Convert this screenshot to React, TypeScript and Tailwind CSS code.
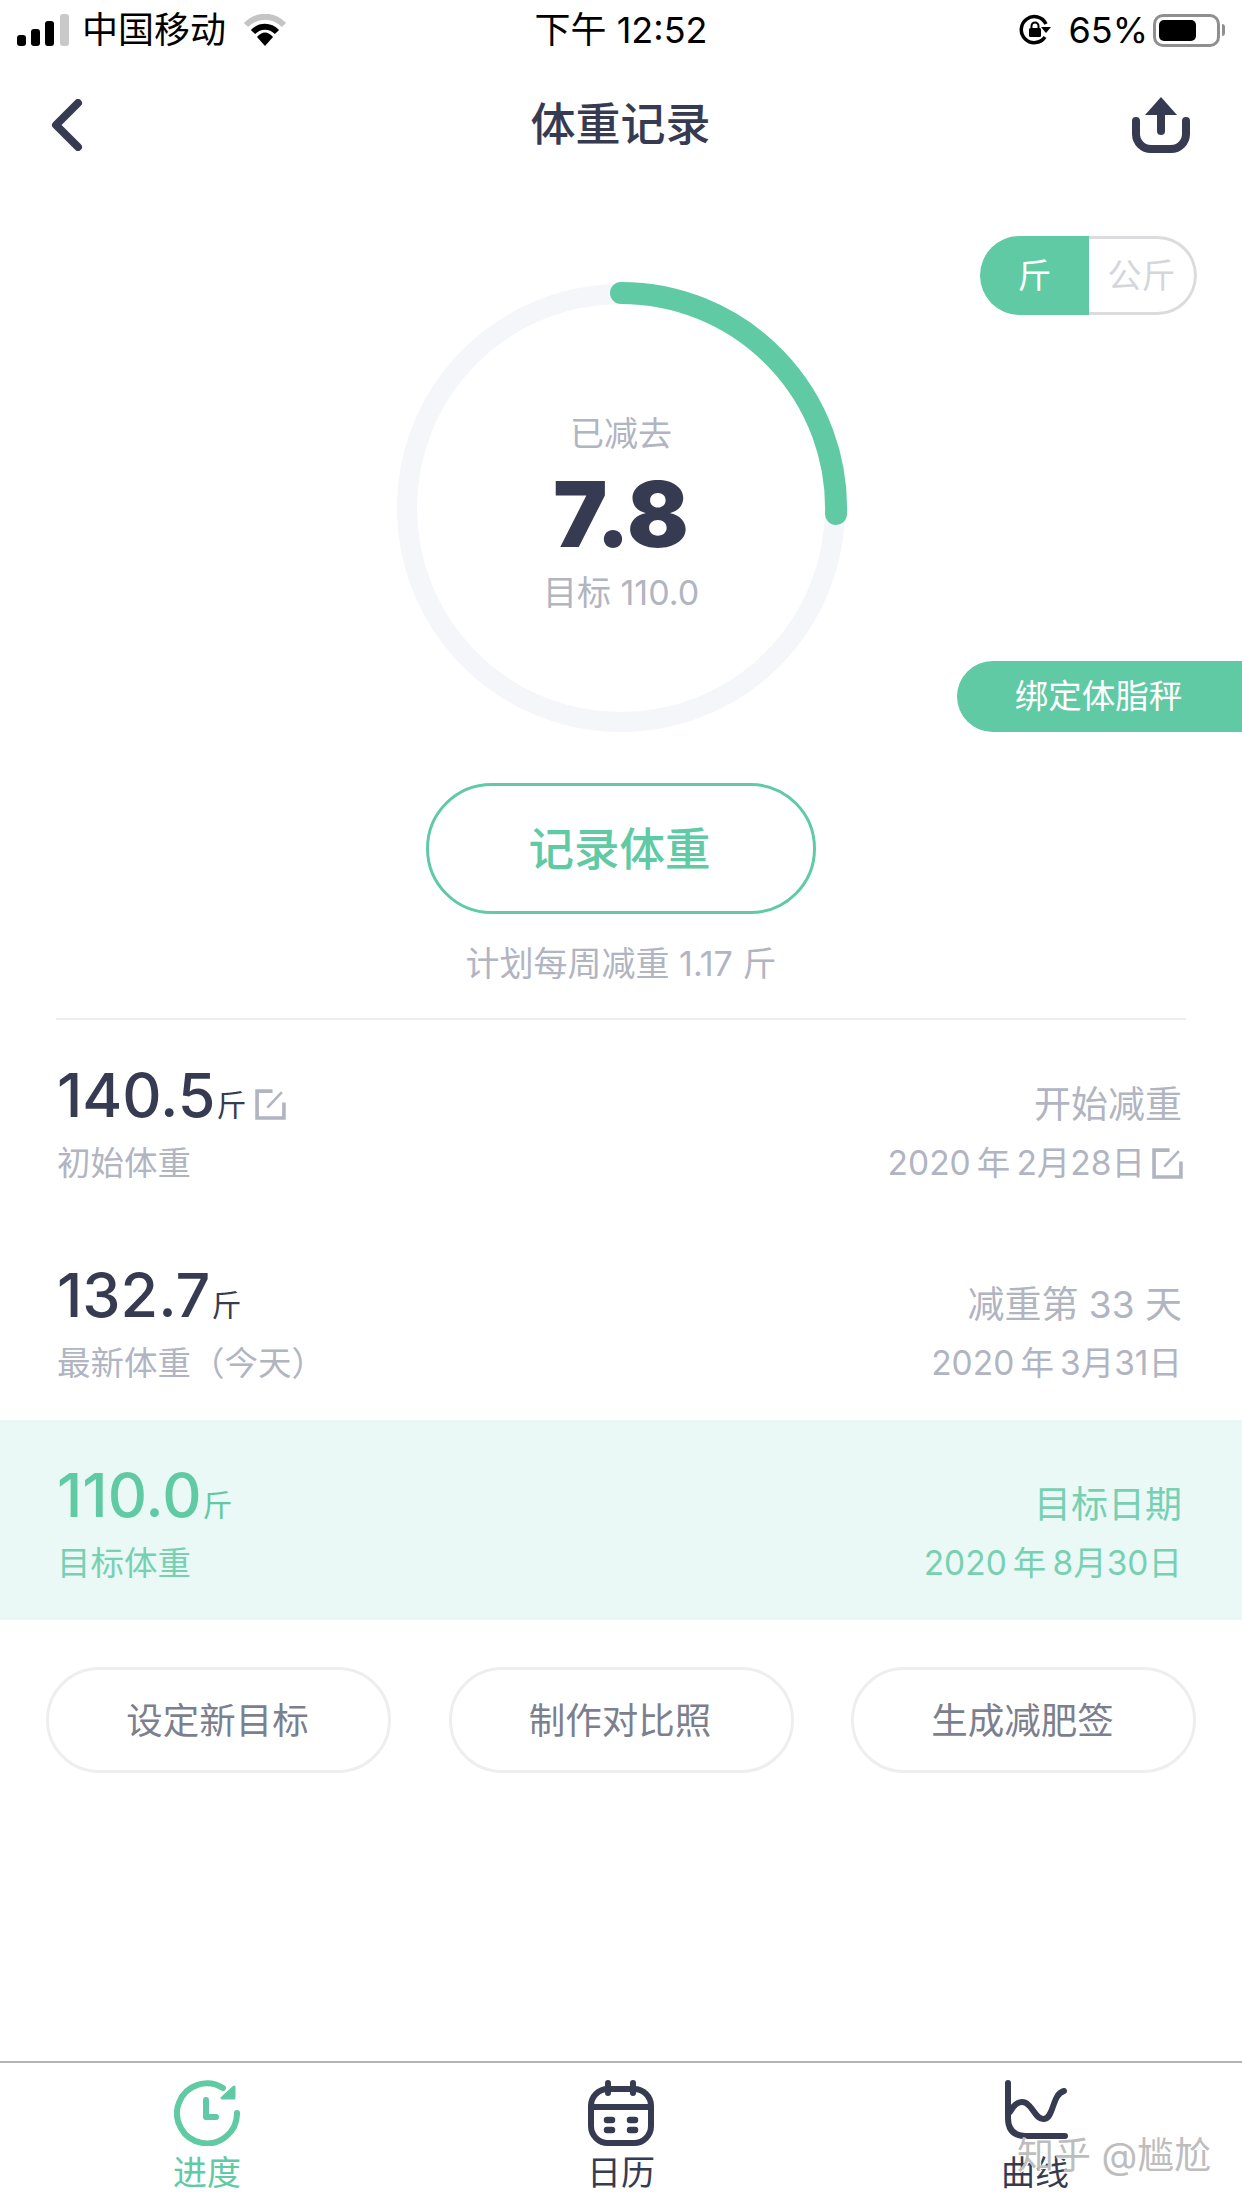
const font = { fontFamily: '"Inter", "Noto Sans CJK SC", sans-serif' };

function EditIcon({ className }: { className?: string }) {
  return (
    <svg viewBox="0 0 30 30" className={className} fill="none" stroke="#b1b4c1" strokeWidth="3.5">
      <path d="M17 2H2V28H28V13" />
      <path d="M12 18L26 3" strokeWidth="2.5" />
    </svg>
  );
}

function Signal() {
  return (
    <svg width="52" height="32" viewBox="0 0 52 32">
      <rect x="0" y="21" width="9" height="11" rx="3" fill="#000" />
      <rect x="14" y="15" width="9" height="17" rx="3" fill="#000" />
      <rect x="28" y="7" width="9" height="25" rx="3" fill="#000" />
      <rect x="43" y="0" width="9" height="32" rx="3" fill="#c9c9c9" />
    </svg>
  );
}

function Wifi() {
  return (
    <svg width="44" height="32" viewBox="0 0 44 32">
      <path d="M3 11C14 0 30 0 41 11" fill="none" stroke="#c4c4c4" strokeWidth="6" />
      <path d="M10 18C17 11 27 11 34 18" fill="none" stroke="#000" strokeWidth="6" />
      <path d="M14 23C19 17 25 17 30 23L22 32Z" fill="#000" />
    </svg>
  );
}

function LockRotate() {
  return (
    <svg width="32" height="32" viewBox="0 0 32 32">
      <path d="M26 23A13 13 0 1 1 27 10" fill="none" stroke="#000" strokeWidth="3.5" />
      <path d="M22 13H32L27 19Z" fill="#000" />
      <rect x="10" y="14" width="12" height="9" rx="1.5" fill="#000" />
      <path d="M12.5 14V12A3.5 3.5 0 0 1 19.5 12V14" fill="none" stroke="#000" strokeWidth="2" />
    </svg>
  );
}

function ShareIcon() {
  return (
    <svg width="60" height="57" viewBox="0 0 60 57" fill="none" stroke="#363b52" strokeWidth="8" strokeLinecap="round">
      <path d="M5 24V37A15 15 0 0 0 20 52H40A15 15 0 0 0 55 37V24" />
      <path d="M30 14V34" />
      <path d="M30 0L46 18H14Z" fill="#363b52" stroke="none" />
    </svg>
  );
}

function ClockIcon() {
  return (
    <svg width="66" height="66" viewBox="0 0 66 66" fill="none" stroke="#5fcaa3" strokeWidth="6" strokeLinecap="round" strokeLinejoin="round">
      <path d="M63 33A30 30 0 1 1 49 8" />
      <path d="M60 7V18H48Z" fill="#5fcaa3" strokeWidth="3" />
      <path d="M32 20V37H42" />
    </svg>
  );
}

function CalendarIcon() {
  return (
    <svg width="66" height="66" viewBox="0 0 66 66" fill="none" stroke="#363b52" strokeWidth="6" strokeLinecap="round">
      <rect x="3" y="9" width="60" height="54" rx="17" />
      <path d="M3 27H63" />
      <path d="M20 3V13M45 3V13" />
      <path d="M19 40H24M42 40H47M19 50H24M42 50H47" strokeWidth="6.5" />
    </svg>
  );
}

function CurveIcon() {
  return (
    <svg width="66" height="66" viewBox="0 0 66 66" fill="none" stroke="#363b52" strokeWidth="6" strokeLinecap="round">
      <path d="M6 3V38Q6 56 24 56H63" />
      <path d="M8 32C12 24 18 20 24 23C32 28 34 40 42 39C52 38 50 14 62 11" />
    </svg>
  );
}

function StatRow({ value, label, right, date, green, edit }: { value: string; label: string; right: string; date: string; green?: boolean; edit?: boolean }) {
  const numColor = green ? 'text-[#5fcaa3]' : 'text-[#363b52]';
  const subColor = green ? 'text-[#78d0b3]' : 'text-[#b1b4c1]';
  return (
    <div className={`flex h-[200px] justify-between pl-[57px] pr-[60px] pt-[45px] ${green ? 'bg-[#eaf9f6]' : ''}`}>
      <div>
        <div className="flex h-[60px] items-center">
          <span className={`text-[61px] leading-[60px] font-medium ${numColor}`}>{value}</span>
          <span className={`ml-[1px] mt-[20px] text-[30px] leading-[30px] ${numColor}`}>斤</span>
          {edit && <EditIcon className="ml-[8px] mt-[18px] h-[31px] w-[31px]" />}
        </div>
        <div className={`mt-[16px] text-[33.5px] leading-[44px] ${subColor}`}>{label}</div>
      </div>
      <div className="flex flex-col items-end">
        <div className={`flex h-[60px] items-center pt-[20px] text-[37px] leading-[40px] ${subColor}`}>{right}</div>
        <div className={`mt-[16px] flex items-center text-[33.5px] leading-[44px] ${subColor}`}>
          {date}
          {edit && <EditIcon className="ml-[7px] mr-[-1px] h-[31px] w-[31px]" />}
        </div>
      </div>
    </div>
  );
}

function PillButton({ children }: { children: string }) {
  return (
    <button className="flex h-[106px] w-[345px] items-center justify-center rounded-[53px] border-[3px] border-[#eeeeef] pr-[2px] pt-[2px] text-[36.5px] text-[#7c7f8e]">
      {children}
    </button>
  );
}

export default function App() {
  return (
    <div className="relative flex h-[2208px] w-[1242px] flex-col overflow-hidden bg-white" style={font}>
      {/* status bar */}
      <div className="flex h-[60px] items-center px-[17px] text-[36px] leading-[40px] text-black">
        <div className="flex flex-1 items-center">
          <Signal />
          <span className="ml-[13px]">中国移动</span>
          <span className="ml-[17px]"><Wifi /></span>
        </div>
        <div>下午 12:52</div>
        <div className="flex flex-1 items-center justify-end">
          <LockRotate />
          <span className="ml-[17px]">65%</span>
          <div className="ml-[5px] flex h-[33px] w-[67px] items-center rounded-[10px] border-[3px] border-[#8f8f8f] p-[3px]">
            <div className="h-[21px] w-[37px] rounded-[5px] bg-black" />
          </div>
          <div className="ml-[2px] h-[12px] w-[3px] rounded-r bg-[#8f8f8f]" />
        </div>
      </div>

      {/* nav */}
      <div className="flex h-[130px] items-center pl-[50px] pr-[51px]">
        <div className="flex-1">
          <svg width="34" height="52" viewBox="0 0 34 52" fill="none" stroke="#363b52" strokeWidth="8" strokeLinecap="round" strokeLinejoin="round">
            <path d="M28 4L6 26L28 48" />
          </svg>
        </div>
        <div className="text-[45px] font-medium text-[#363b52]">体重记录</div>
        <div className="flex flex-1 justify-end">
          <ShareIcon />
        </div>
      </div>

      {/* hero */}
      <div className="grid grid-cols-[1fr_460px_1fr]">
        <div />
        <div className="relative mt-[88px] h-[460px] w-[460px]">
          <svg width="460" height="460" viewBox="0 0 460 460" fill="none">
            <circle cx="230" cy="230" r="214" stroke="#f5f6f9" strokeWidth="20" />
            <path d="M230 15A215 215 0 0 1 445 236" stroke="#5fcaa3" strokeWidth="22" strokeLinecap="round" />
          </svg>
          <div className="absolute inset-0 flex flex-col items-center pt-[134px]">
            <div className="text-[34px] leading-[44px] text-[#b1b4c1]">已减去</div>
            <div className="mt-[8px] text-[91px] leading-[100px] font-black text-[#363b52]">7.8</div>
            <div className="mt-[7px] text-[34px] leading-[44px] text-[#b1b4c1]">目标 110.0</div>
          </div>
        </div>
        <div className="flex flex-col items-end">
          <div className="mr-[45px] mt-[46px] flex h-[79px] w-[217px]">
            <div className="flex w-[109px] items-center justify-center rounded-l-[40px] bg-[#5fcaa3] text-[34px] text-white">斤</div>
            <div className="flex flex-1 items-center justify-center rounded-r-[40px] border-[3px] border-l-0 border-[#dcdcdf] text-[34px] text-[#d5d6db]">公斤</div>
          </div>
          <div className="mt-[346px] flex h-[71px] w-[285px] items-center justify-center rounded-l-[36px] bg-[#5fcaa3] pr-[2px] text-[33.5px] text-white">绑定体脂秤</div>
        </div>
      </div>

      {/* record */}
      <div className="flex flex-col items-center">
        <button className="mt-[45px] flex h-[131px] w-[390px] items-center justify-center rounded-[66px] border-[3px] border-[#5fcaa3] pr-[3px] pt-[3px] text-[45.5px] font-medium text-[#5fcaa3]">
          记录体重
        </button>
        <div className="mt-[28px] text-[34px] leading-[44px] text-[#b1b4c1]">计划每周减重 1.17 斤</div>
      </div>

      <div className="mx-[56px] mt-[32px] h-[2px] bg-[#eeeeef]" />

      {/* stats */}
      <StatRow value="140.5" label="初始体重" right="开始减重" date="2020&#8201;年&#8201;2月28日" edit />
      <StatRow value="132.7" label="最新体重（今天）" right="减重第 33 天" date="2020&#8201;年&#8201;3月31日" />
      <StatRow value="110.0" label="目标体重" right="目标日期" date="2020&#8201;年&#8201;8月30日" green />

      {/* actions */}
      <div className="mt-[47px] flex justify-between px-[46px]">
        <PillButton>设定新目标</PillButton>
        <PillButton>制作对比照</PillButton>
        <PillButton>生成减肥签</PillButton>
      </div>

      <div className="flex-1" />

      {/* tab bar */}
      <div className="grid h-[147px] grid-cols-3 border-t-2 border-[#b3b3b3] pt-[17px]">
        <div className="flex flex-col items-center text-[#5fcaa3]">
          <ClockIcon />
          <span className="mt-[7px] text-[34px] leading-[40px]">进度</span>
        </div>
        <div className="flex flex-col items-center text-[#363b52]">
          <CalendarIcon />
          <span className="mt-[7px] text-[34px] leading-[40px]">日历</span>
        </div>
        <div className="flex flex-col items-center text-[#363b52]">
          <CurveIcon />
          <span className="mt-[7px] text-[34px] leading-[40px]">曲线</span>
        </div>
      </div>

      {/* watermark */}
      <div className="absolute left-[1017px] top-[2133px] text-[37px] leading-[46px] whitespace-nowrap text-[#bdbdbd] [text-shadow:1px_1px_0_#fff]">
        知乎 @尴尬
      </div>
    </div>
  );
}
